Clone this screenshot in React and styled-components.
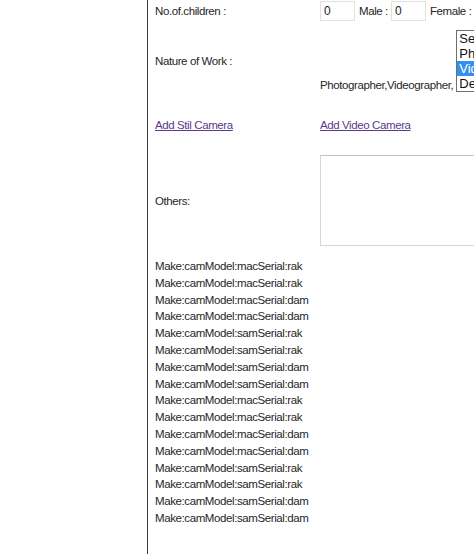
import React from "react";
import styled, { createGlobalStyle } from "styled-components";

const GlobalStyle = createGlobalStyle`
  html, body {
    margin: 0;
    padding: 0;
    background: #ffffff;
    overflow: hidden;
  }
  body {
    font-family: "Liberation Sans", Arial, sans-serif;
    font-size: 11.5px;
    color: #262626;
  }
`;

const Page = styled.div`
  display: flex;
  min-height: 554px;
  width: 474px;
  overflow: hidden;
`;

const Gutter = styled.div`
  width: 147px;
  flex-shrink: 0;
`;

const Panel = styled.div`
  flex-shrink: 0;
  width: 600px;
  border-left: 1px solid #3c3c3c;
  padding-left: 7px;
  letter-spacing: -0.4px;
`;

const FormGrid = styled.div`
  display: grid;
  grid-template-columns: 165px 1fr;
`;

const Label = styled.div`
  display: flex;
  align-items: center;
  height: ${(p) => p.$h}px;
  box-sizing: border-box;
`;

const Cell = styled.div`
  display: flex;
  align-items: ${(p) => p.$align || "center"};
  gap: ${(p) => p.$gap ?? 4}px;
  height: ${(p) => p.$h}px;
  padding: ${(p) => p.$pad || "0"};
  box-sizing: border-box;
  white-space: nowrap;
`;

const SmallInput = styled.input`
  width: 35px;
  height: 20px;
  box-sizing: border-box;
  border: 1px solid #e2e2e2;
  padding: 0 3px;
  margin: 0 ${(p) => p.$mr || 0}px 0 0;
  font-family: "Liberation Sans", Arial, sans-serif;
  font-size: 12px;
  color: #262626;
  background: #fff;
  outline: none;
`;

const InlineText = styled.span`
  line-height: 13px;
`;

const ListBox = styled.div`
  flex-shrink: 0;
  width: 120px;
  height: 62px;
  box-sizing: border-box;
  border: 1px solid #6f6f6f;
  display: flex;
  flex-direction: column;
  letter-spacing: 0;
`;

const Option = styled.div`
  height: 15px;
  line-height: 15px;
  padding-left: 2px;
  font-size: 13px;
  color: ${(p) => (p.$selected ? "#ffffff" : "#111111")};
  background: ${(p) => (p.$selected ? "#3390ee" : "transparent")};
`;

const Link = styled.a`
  color: #5a3a8c;
  text-decoration: underline;
  cursor: pointer;
`;

const TextArea = styled.textarea`
  width: 320px;
  height: 91px;
  box-sizing: border-box;
  border: 1px solid #d6d6d6;
  border-top-color: #c4c4c4;
  resize: none;
  outline: none;
  padding: 2px;
  font-family: "Liberation Sans", Arial, sans-serif;
`;

const CameraList = styled.ul`
  list-style: none;
  margin: 7px 0 0;
  padding: 0;
`;

const CameraItem = styled.li`
  line-height: 16.8px;
  height: 16.8px;
`;

const cameras = [
  "Make:camModel:macSerial:rak",
  "Make:camModel:macSerial:rak",
  "Make:camModel:macSerial:dam",
  "Make:camModel:macSerial:dam",
  "Make:camModel:samSerial:rak",
  "Make:camModel:samSerial:rak",
  "Make:camModel:samSerial:dam",
  "Make:camModel:samSerial:dam",
  "Make:camModel:macSerial:rak",
  "Make:camModel:macSerial:rak",
  "Make:camModel:macSerial:dam",
  "Make:camModel:macSerial:dam",
  "Make:camModel:samSerial:rak",
  "Make:camModel:samSerial:rak",
  "Make:camModel:samSerial:dam",
  "Make:camModel:samSerial:dam",
];

const workOptions = ["Select", "Photographer", "Videographer", "Designer"];

export default function App() {
  return (
    <>
      <GlobalStyle />
      <Page>
        <Gutter />
        <Panel>
          <FormGrid>
            <Label $h={22}>No.of.children :</Label>
            <Cell $h={22} $gap={3}>
              <SmallInput defaultValue="0" $mr={1} />
              <InlineText>Male :</InlineText>
              <SmallInput defaultValue="0" $mr={1} />
              <InlineText>Female :</InlineText>
              <SmallInput defaultValue="0" />
            </Cell>

            <Label $h={78}>Nature of Work :</Label>
            <Cell $h={78} $align="flex-end" $pad="0 0 8px 0" $gap={3}>
              <InlineText>Photographer,Videographer,</InlineText>
              <ListBox>
                {workOptions.map((o, i) => (
                  <Option key={o} $selected={i === 2}>
                    {o}
                  </Option>
                ))}
              </ListBox>
            </Cell>

            <Label $h={50}>
              <Link>Add Stil Camera</Link>
            </Label>
            <Cell $h={50}>
              <Link>Add Video Camera</Link>
            </Cell>

            <Label $h={101}>Others:</Label>
            <Cell $h={101} $align="flex-start" $pad="5px 0 0 0">
              <TextArea />
            </Cell>
          </FormGrid>
          <CameraList>
            {cameras.map((c, i) => (
              <CameraItem key={i}>{c}</CameraItem>
            ))}
          </CameraList>
        </Panel>
      </Page>
    </>
  );
}
